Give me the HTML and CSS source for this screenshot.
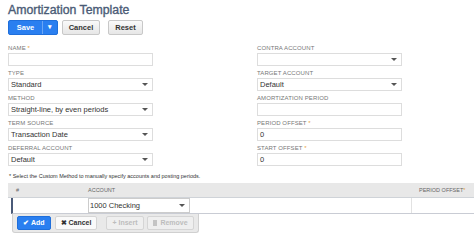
FILE: index.html
```html
<!DOCTYPE html>
<html>
<head>
<meta charset="utf-8">
<link rel="stylesheet" href="styles.css">
</head>
<body>
<div class="page">
  <h1 class="title">Amortization Template</h1>
  <div class="toolbar">
    <div class="btn-save"><span class="save-label">Save</span><span class="save-arrow">▾</span></div>
    <div class="btn btn-cancel">Cancel</div>
    <div class="btn btn-reset">Reset</div>
  </div>
  <div class="form">
    <div class="col">
      <div class="field"><div class="label">NAME <span class="req">*</span></div><div class="input"></div></div>
      <div class="field"><div class="label">TYPE</div><div class="input select">Standard<span class="caret"></span></div></div>
      <div class="field"><div class="label">METHOD</div><div class="input select">Straight-line, by even periods<span class="caret"></span></div></div>
      <div class="field"><div class="label">TERM SOURCE</div><div class="input select">Transaction Date<span class="caret"></span></div></div>
      <div class="field"><div class="label">DEFERRAL ACCOUNT</div><div class="input select">Default<span class="caret"></span></div></div>
    </div>
    <div class="col">
      <div class="field"><div class="label">CONTRA ACCOUNT</div><div class="input select"><span class="caret"></span></div></div>
      <div class="field"><div class="label">TARGET ACCOUNT</div><div class="input select">Default<span class="caret"></span></div></div>
      <div class="field"><div class="label">AMORTIZATION PERIOD</div><div class="input"></div></div>
      <div class="field"><div class="label">PERIOD OFFSET <span class="req">*</span></div><div class="input">0</div></div>
      <div class="field"><div class="label">START OFFSET <span class="req">*</span></div><div class="input">0</div></div>
    </div>
  </div>
  <div class="note">* Select the Custom Method to manually specify accounts and posting periods.</div>
  <div class="grid">
    <div class="grid-head">
      <div class="gh-num">#</div>
      <div class="gh-acct">ACCOUNT</div>
      <div class="gh-fill"></div>
      <div class="gh-po">PERIOD OFFSET<span class="req">*</span></div>
    </div>
    <div class="grid-row">
      <div class="gr-num"></div>
      <div class="gr-acct"><div class="cell-select">1000 Checking<span class="caret"></span></div></div>
      <div class="gr-fill"></div>
      <div class="gr-po"></div>
    </div>
    <div class="row-actions">
      <div class="ra-btn ra-add">✔ Add</div>
      <div class="ra-btn ra-cancel">✖ Cancel</div>
      <div class="ra-btn ra-dis ra-insert">+ Insert</div>
      <div class="ra-btn ra-dis ra-remove"><span class="trash"></span>Remove</div>
    </div>
  </div>
</div>
</body>
</html>
```
FILE: styles.css
```css
* { box-sizing: border-box; }
html, body { margin: 0; padding: 0; background: #fff; }
body { font-family: "Liberation Sans", Arial, sans-serif; color: #333; }
.page { padding: 0 0 0 8px; width: 474px; }
.title { margin: 0; padding-top: 4px; font-size: 12.3px; font-weight: normal; color: #4a5b76; line-height: 13px; height: 20px; -webkit-text-stroke: 0.35px #4a5b76; }
.toolbar { display: flex; height: 16px; }
.btn-save { display: flex; width: 50px; height: 15px; background: #2a7ff0; border: 1px solid #1f6fdb; border-radius: 2px; color: #fff; font-weight: bold; font-size: 7.5px; }
.save-label { width: 33px; text-align: center; line-height: 13px; }
.save-arrow { flex: 1; border-left: 1px solid #6aa6f5; text-align: center; line-height: 12px; font-size: 7px; }
.btn { height: 15px; background: linear-gradient(#fafafa, #e6e6e6); border: 1px solid #c8c8c8; border-radius: 2px; font-size: 7.5px; font-weight: bold; color: #333; line-height: 13px; text-align: center; }
.btn-cancel { width: 38px; margin-left: 4px; }
.btn-reset { width: 35px; margin-left: 8px; }
.form { display: flex; gap: 104px; margin-top: 8px; }
.col { width: 145px; display: flex; flex-direction: column; gap: 2px; }
.field { height: 23px; }
.label { font-size: 6px; color: #777; letter-spacing: 0.1px; line-height: 8px; height: 9px; }
.req { color: #e8a33c; }
.input { position: relative; height: 13px; border: 1px solid #ddd; background: #fff; font-size: 7.5px; color: #333; padding-left: 2px; line-height: 11px; }
.caret { position: absolute; right: 4px; top: 4px; width: 0; height: 0; border-left: 3.5px solid transparent; border-right: 3.5px solid transparent; border-top: 3.5px solid #555; }
.note { font-size: 5.5px; color: #333; margin-top: 5px; margin-left: 1px; height: 11px; line-height: 8px; }
.grid-head { display: flex; height: 15px; background: #e8e8e8; border-bottom: 1px solid #cfd3d8; font-size: 5.5px; color: #666; line-height: 14px; }
.gh-num { width: 80px; padding-left: 8px; }
.gh-acct { width: 102px; }
.gh-fill { flex: 1; }
.gh-po { width: 63px; padding-left: 8px; }
.grid-row { display: flex; height: 16px; border-left: 2px solid #4a5a78; margin-left: 3px; border-bottom: 1px solid #c9ccd4; }
.gr-num { width: 75px; }
.gr-acct { width: 102px; }
.gr-fill { flex: 1; }
.gr-po { width: 63px; border-left: 1px solid #e2e2e2; }
.cell-select { position: relative; height: 15px; border: 1px solid #ccc; font-size: 7.5px; padding-left: 1px; line-height: 13px; color: #333; }
.cell-select .caret { top: 5px; }
.row-actions { display: flex; align-items: center; width: 187px; height: 19px; margin-left: 4px; padding: 0 4px; background: #e9e9e9; border: 1px solid #d0d0d0; border-top: none; border-radius: 0 0 3px 3px; }
.ra-btn { height: 14px; font-size: 7px; font-weight: bold; line-height: 12px; border-radius: 2px; white-space: nowrap; text-align: center; }
.ra-add { background: #2a7ff0; color: #fff; border: 1px solid #1f6fdb; width: 34px; }
.ra-cancel { background: #fafafa; color: #333; border: 1px solid #d5d5d5; width: 42px; margin-left: 4px; }
.ra-dis { background: #efefef; color: #bdbdbd; border: 1px solid #d5d5d5; }
.ra-insert { width: 38px; margin-left: 9px; }
.ra-remove { width: 47px; margin-left: 3px; }
.trash { display: inline-block; width: 4px; height: 6px; background: #c4c4c4; margin-right: 3px; vertical-align: -1px; }
```
